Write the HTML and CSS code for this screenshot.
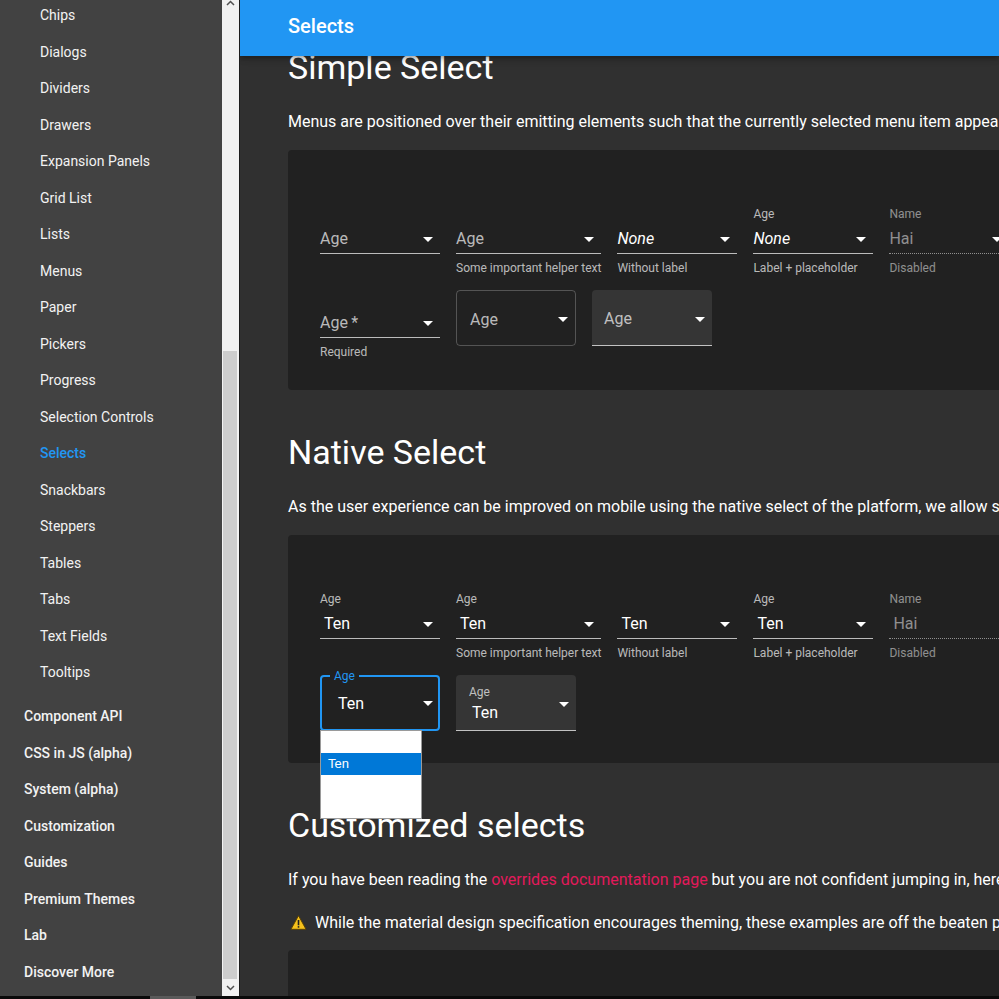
FILE: index.html
```html
<!DOCTYPE html>
<html lang="en">
<head>
<meta charset="utf-8">
<title>Selects</title>
<link rel="stylesheet" href="styles.css">
</head>
<body>
<div class="app">
  <div class="top">
    <nav class="sidebar">
      <div class="nav">
        <div class="nav-item sub">Chips</div>
        <div class="nav-item sub">Dialogs</div>
        <div class="nav-item sub">Dividers</div>
        <div class="nav-item sub">Drawers</div>
        <div class="nav-item sub">Expansion Panels</div>
        <div class="nav-item sub">Grid List</div>
        <div class="nav-item sub">Lists</div>
        <div class="nav-item sub">Menus</div>
        <div class="nav-item sub">Paper</div>
        <div class="nav-item sub">Pickers</div>
        <div class="nav-item sub">Progress</div>
        <div class="nav-item sub">Selection Controls</div>
        <div class="nav-item sub active">Selects</div>
        <div class="nav-item sub">Snackbars</div>
        <div class="nav-item sub">Steppers</div>
        <div class="nav-item sub">Tables</div>
        <div class="nav-item sub">Tabs</div>
        <div class="nav-item sub">Text Fields</div>
        <div class="nav-item sub">Tooltips</div>
        <div class="nav-gap"></div>
        <div class="nav-item topl">Component API</div>
        <div class="nav-item topl">CSS in JS (alpha)</div>
        <div class="nav-item topl">System (alpha)</div>
        <div class="nav-item topl">Customization</div>
        <div class="nav-item topl">Guides</div>
        <div class="nav-item topl">Premium Themes</div>
        <div class="nav-item topl">Lab</div>
        <div class="nav-item topl">Discover More</div>
      </div>
    </nav>
    <div class="scrollbar">
      <div class="sb-up"><svg width="9" height="6" viewBox="0 0 9 6"><path d="M1 5 L4.5 1.5 L8 5" fill="none" stroke="#505050" stroke-width="1.5"/></svg></div>
      <div class="sb-track"><div class="sb-thumb"></div></div>
      <div class="sb-down"><svg width="9" height="6" viewBox="0 0 9 6"><path d="M1 1 L4.5 4.5 L8 1" fill="none" stroke="#505050" stroke-width="1.5"/></svg></div>
    </div>
    <main class="main">
      <header class="appbar">Selects</header>
      <div class="content">
        <h2>Simple Select</h2>
        <p>Menus are positioned over their emitting elements such that the currently selected menu item appears on top of the emitting element.</p>
        <div class="paper">
          <div class="row">
            <div class="fc">
              <div class="lbl"></div>
              <div class="inp"><span class="val ph">Age</span><svg class="arrow" viewBox="0 0 24 24"><path d="M7 10l5 5 5-5z"/></svg></div>
            </div>
            <div class="fc">
              <div class="lbl"></div>
              <div class="inp"><span class="val ph">Age</span><svg class="arrow" viewBox="0 0 24 24"><path d="M7 10l5 5 5-5z"/></svg></div>
              <div class="helper">Some important helper text</div>
            </div>
            <div class="fc">
              <div class="lbl"></div>
              <div class="inp"><span class="val em">None</span><svg class="arrow" viewBox="0 0 24 24"><path d="M7 10l5 5 5-5z"/></svg></div>
              <div class="helper">Without label</div>
            </div>
            <div class="fc">
              <div class="lbl">Age</div>
              <div class="inp"><span class="val em">None</span><svg class="arrow" viewBox="0 0 24 24"><path d="M7 10l5 5 5-5z"/></svg></div>
              <div class="helper">Label + placeholder</div>
            </div>
            <div class="fc">
              <div class="lbl dis">Name</div>
              <div class="inp dotted"><span class="val dis">Hai</span><svg class="arrow" viewBox="0 0 24 24"><path d="M7 10l5 5 5-5z"/></svg></div>
              <div class="helper dis">Disabled</div>
            </div>
          </div>
          <div class="row">
            <div class="fc">
              <div class="lbl"></div>
              <div class="inp"><span class="val ph">Age&#8201;*</span><svg class="arrow" viewBox="0 0 24 24"><path d="M7 10l5 5 5-5z"/></svg></div>
              <div class="helper">Required</div>
            </div>
            <div class="fc">
              <div class="outlined"><span class="val ph">Age</span><svg class="arrow" viewBox="0 0 24 24"><path d="M7 10l5 5 5-5z"/></svg></div>
            </div>
            <div class="fc">
              <div class="filled"><span class="val ph">Age</span><svg class="arrow" viewBox="0 0 24 24"><path d="M7 10l5 5 5-5z"/></svg></div>
            </div>
          </div>
        </div>

        <h2>Native Select</h2>
        <p>As the user experience can be improved on mobile using the native select of the platform, we allow such pattern.</p>
        <div class="paper">
          <div class="row">
            <div class="fc">
              <div class="lbl">Age</div>
              <div class="inp"><span class="val nv">Ten</span><svg class="arrow" viewBox="0 0 24 24"><path d="M7 10l5 5 5-5z"/></svg></div>
            </div>
            <div class="fc">
              <div class="lbl">Age</div>
              <div class="inp"><span class="val nv">Ten</span><svg class="arrow" viewBox="0 0 24 24"><path d="M7 10l5 5 5-5z"/></svg></div>
              <div class="helper">Some important helper text</div>
            </div>
            <div class="fc">
              <div class="lbl"></div>
              <div class="inp"><span class="val nv">Ten</span><svg class="arrow" viewBox="0 0 24 24"><path d="M7 10l5 5 5-5z"/></svg></div>
              <div class="helper">Without label</div>
            </div>
            <div class="fc">
              <div class="lbl">Age</div>
              <div class="inp"><span class="val nv">Ten</span><svg class="arrow" viewBox="0 0 24 24"><path d="M7 10l5 5 5-5z"/></svg></div>
              <div class="helper">Label + placeholder</div>
            </div>
            <div class="fc">
              <div class="lbl dis">Name</div>
              <div class="inp dotted"><span class="val nv dis">Hai</span></div>
              <div class="helper dis">Disabled</div>
            </div>
          </div>
          <div class="row">
            <div class="fc">
              <div class="outlined focus"><span class="notch">Age</span><span class="val">Ten</span><svg class="arrow" viewBox="0 0 24 24"><path d="M7 10l5 5 5-5z"/></svg></div>
              <div class="popup">
                <div class="opt"></div>
                <div class="opt sel">Ten</div>
                <div class="opt">Twenty</div>
                <div class="opt">Thirty</div>
              </div>
            </div>
            <div class="fc">
              <div class="filled"><div class="fcol"><div class="flabel">Age</div><div class="fval">Ten</div></div><svg class="arrow" viewBox="0 0 24 24"><path d="M7 10l5 5 5-5z"/></svg></div>
            </div>
          </div>
        </div>

        <h2>Customized selects</h2>
        <p>If you have been reading the <span class="link">overrides documentation page</span> but you are not confident jumping in, here's an example of how you can change the main color of an Input.</p>
        <p class="note"><svg class="warn" viewBox="0 0 16 16"><path d="M8 1.6 L15.1 14.4 H0.9 Z" fill="#f6c21c" stroke="#5a4100" stroke-width="0.9" stroke-linejoin="round"/><rect x="7.25" y="5.6" width="1.5" height="5" fill="#222"/><rect x="7.25" y="11.4" width="1.5" height="1.5" fill="#222"/></svg>While the material design specification encourages theming, these examples are off the beaten path.</p>
        <div class="paper last"></div>
      </div>
    </main>
  </div>
  <div class="hbar"><div class="hthumb"></div></div>
</div>
</body>
</html>
```

FILE: styles.css
```css
html, body {
  margin: 0;
  height: 100%;
  overflow: hidden;
  background: #303030;
  font-family: Roboto, "Liberation Sans", Arial, sans-serif;
}

.app {
  display: flex;
  flex-direction: column;
  height: 999px;
}

.top {
  display: flex;
  flex: 1;
  min-height: 0;
}

/* Sidebar */
.sidebar {
  width: 222px;
  flex: none;
  background: #424242;
  overflow: hidden;
}

.nav {
  margin-top: -3px;
}

.nav-item {
  height: 36.5px;
  display: flex;
  align-items: center;
  font-size: 14px;
  color: #f2f2f2;
  white-space: nowrap;
}

.nav-item.sub {
  padding-left: 40px;
}

.nav-item.topl {
  padding-left: 24px;
  font-weight: 500;
}

.nav-item.active {
  color: #2196f3;
  font-weight: 500;
}

.nav-gap {
  height: 7.5px;
}

/* Fake scrollbar of the sidebar */
.scrollbar {
  width: 17px;
  flex: none;
  background: #f1f1f1;
  display: flex;
  flex-direction: column;
}

.sb-up {
  height: 8px;
  display: flex;
  justify-content: center;
  align-items: flex-start;
}

.sb-track {
  flex: 1;
}

.sb-thumb {
  margin: 343px 2px 0 1px;
  height: 628px;
  background: #cdcdcd;
}

.sb-down {
  height: 17px;
  display: flex;
  justify-content: center;
  align-items: center;
}

/* Main */
.main {
  flex: 1;
  position: relative;
  overflow: hidden;
  background: #303030;
  border-left: 1px solid #1c1c1c;
}

.appbar {
  position: absolute;
  top: 0;
  left: 0;
  right: 0;
  height: 56px;
  box-sizing: border-box;
  padding: 0 0 5px 48px;
  display: flex;
  align-items: center;
  background: #2196f3;
  color: #fff;
  font-size: 20px;
  font-weight: 500;
  z-index: 10;
  box-shadow: 0 2px 4px -1px rgba(0,0,0,.2), 0 4px 5px 0 rgba(0,0,0,.14), 0 1px 10px 0 rgba(0,0,0,.12);
}

.content {
  width: 1300px;
  padding: 5px 48px 0;
  color: #fff;
}

h2 {
  margin: 40px 0 21px;
  font-size: 34px;
  font-weight: 400;
  line-height: 44px;
  white-space: nowrap;
}

p {
  margin: 0 0 16px;
  font-size: 16px;
  line-height: 24px;
  white-space: nowrap;
}

p.note {
  padding-top: 3px;
  margin-bottom: 15px;
}

.link {
  color: #e3195b;
}

.warn {
  width: 17px;
  height: 17px;
  vertical-align: -3px;
  margin: 0 8px 0 2px;
}

.paper {
  background: #212121;
  border-radius: 4px;
  padding: 48px 24px 24px;
}

.paper.last {
  height: 200px;
}

.row {
  display: flex;
  align-items: flex-start;
}

/* Form controls */
.fc {
  margin: 8px;
  min-width: 120px;
  display: flex;
  flex-direction: column;
  position: relative;
}

.lbl {
  height: 16px;
  font-size: 12px;
  line-height: 16px;
  color: rgba(255,255,255,.7);
}

.inp {
  height: 32px;
  box-sizing: border-box;
  padding-top: 2px;
  border-bottom: 1px solid rgba(255,255,255,.7);
  display: flex;
  align-items: center;
  font-size: 16px;
}

.inp.dotted {
  border-bottom: 1px dotted rgba(255,255,255,.5);
}

.val {
  flex: 1;
  white-space: nowrap;
  font-size: 16px;
  color: #fff;
}

.ph {
  color: rgba(255,255,255,.7);
}

.em {
  font-style: italic;
  color: #fff;
}

.nv {
  padding-left: 4px;
}

.dis,
.val.dis,
.lbl.dis,
.helper.dis {
  color: rgba(255,255,255,.5);
}

.helper {
  margin-top: 8px;
  font-size: 12px;
  line-height: 12px;
  color: rgba(255,255,255,.7);
  white-space: nowrap;
}

.arrow {
  width: 24px;
  height: 24px;
  flex: none;
  fill: #fff;
}

.outlined {
  height: 56px;
  box-sizing: border-box;
  border: 1px solid rgba(255,255,255,.23);
  border-radius: 4px;
  display: flex;
  align-items: center;
  padding: 2px 0 0 13px;
}

.outlined.focus {
  position: relative;
  border: 2px solid #2196f3;
  padding: 0 0 0 16px;
}

.outlined.focus .arrow {
  margin-right: -2px;
}

.notch {
  position: absolute;
  top: -8px;
  left: 8px;
  padding: 0 4px;
  background: #212121;
  color: #2196f3;
  font-size: 12px;
  line-height: 14px;
}

.filled {
  height: 56px;
  box-sizing: border-box;
  background: rgba(255,255,255,.09);
  border-radius: 4px 4px 0 0;
  border-bottom: 1px solid rgba(255,255,255,.7);
  display: flex;
  align-items: center;
  padding: 2px 0 0 12px;
}

.fcol {
  flex: 1;
}

.flabel {
  font-size: 12px;
  line-height: 14px;
  padding-left: 1px;
  color: rgba(255,255,255,.7);
}

.fval {
  margin-top: 4px;
  font-size: 16px;
  line-height: 19px;
  padding-left: 4px;
  color: #fff;
}

/* Native dropdown list */
.popup {
  position: absolute;
  top: calc(100% - 1px);
  left: 0;
  width: 102px;
  box-sizing: border-box;
  background: #fff;
  border: 1px solid #9a9a9a;
  z-index: 5;
}

.opt {
  height: 22px;
  line-height: 22px;
  padding-left: 7px;
  font-family: "Liberation Sans", Arial, sans-serif;
  font-size: 13px;
  color: #fff;
}

.opt:last-child {
  height: 21px;
}

.opt.sel {
  background: #0078d7;
}

/* Bottom strip */
.hbar {
  height: 3px;
  flex: none;
  background: #0a0a0a;
  display: flex;
}

.hthumb {
  margin-left: 150px;
  width: 46px;
  background: #5a5a5a;
}
```
